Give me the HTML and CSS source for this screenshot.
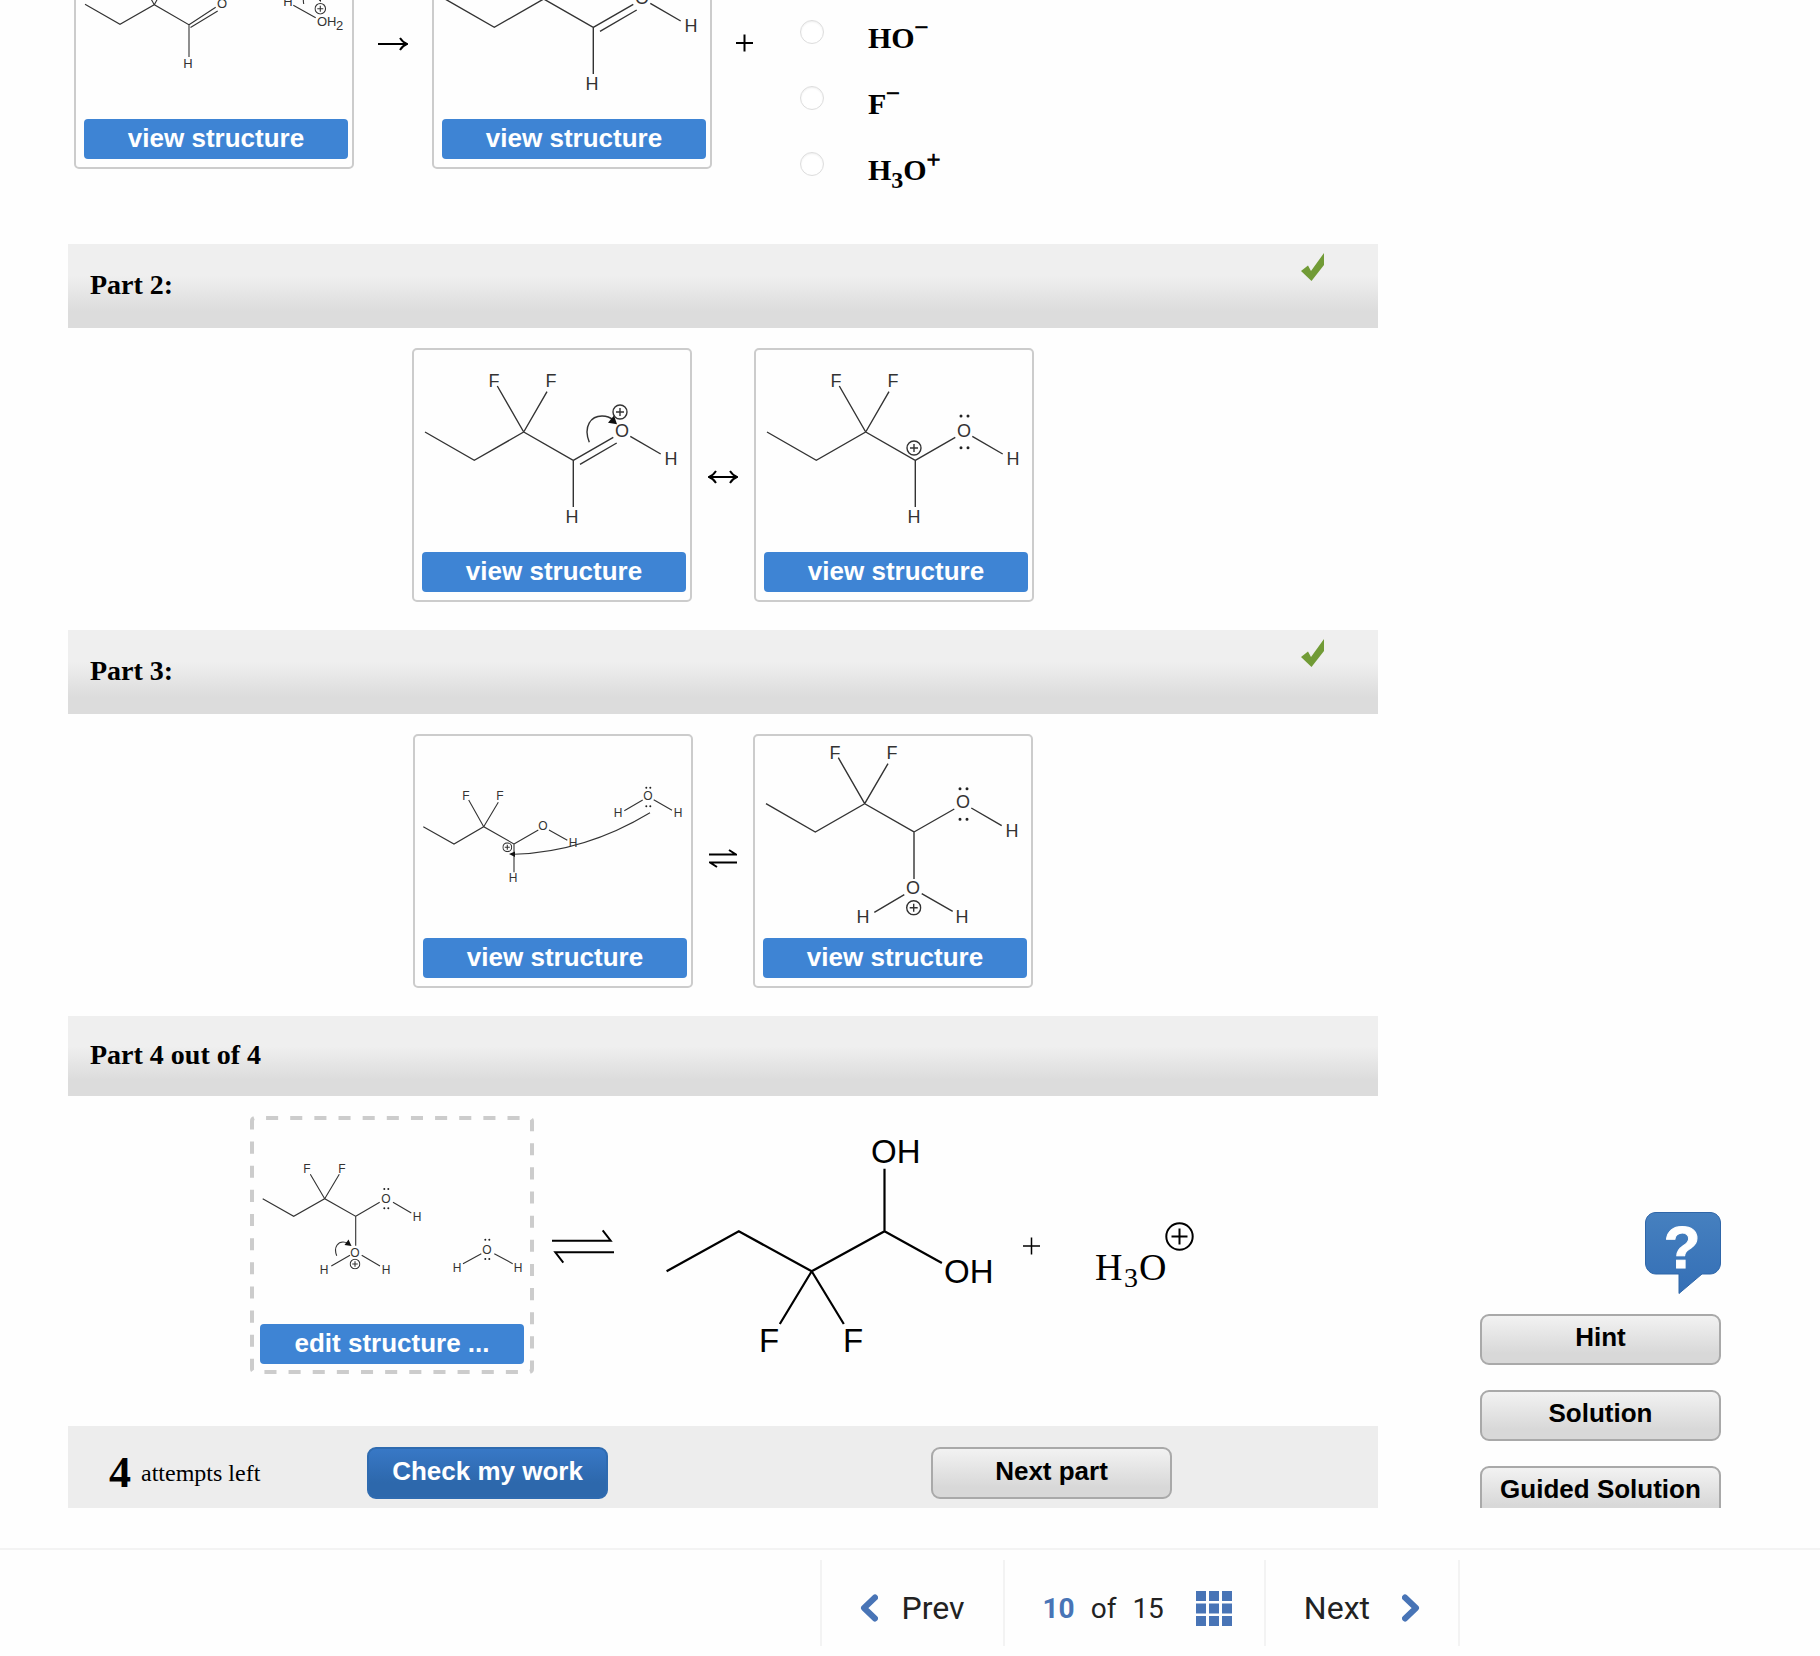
FILE: index.html
```html
<!DOCTYPE html>
<html lang="en">
<head>
  <meta charset="UTF-8" />
  <meta name="viewport" content="width=device-width, initial-scale=1.0"/>
  <title>Question 10 of 15</title>
  <link rel="stylesheet" href="styles.css">
</head>
<body>
  <!-- Shared symbols -->
  <svg class="symbols" aria-hidden="true">
    <symbol id="charge" viewBox="-8 -8 16 16">
      <circle class="hairline" r="7" /><path class="hairline" d="M-4 0H4M0 -4V4" />
    </symbol>
    <symbol id="plus" viewBox="0 0 17 20">
      <path d="M0 11H17M8.5 2.5V19.5" />
    </symbol>
    <symbol id="check" viewBox="0 0 23 28">
      <path d="M0 18L7 12.5L10 18L23 0V12L10.500 28Z" />
    </symbol>
  </svg>

  <main class="workspace">
    <div class="question">
      <!-- Part 1 -->
      <div class="part-one">
        <div class="reaction">
          <div class="card">
            <svg class="structure medium" viewBox="8 0 264 202">
              <path d="M9 87.300L44 107.300L78.300 87.700L113 107.700V140M78.300 87.700L63 61M78.300 87.700L93 61M113 107.700L139.700 90.300M114.500 110.500L141.700 94M217.300 88.300L239.700 100.700M227.700 87C225 72 238 66 243 79" />
              <path class="head" d="M244.700 85L239 79L246 77Z" />
              <text x="146" y="91">O</text>
              <text x="112" y="151">H</text>
              <text x="212" y="89">H</text>
              <text class="start" x="241" y="109">OH</text>
              <text class="start" x="260" y="113">2</text>
              <use href="#charge" x="238.300" y="85.700" width="12" height="12" />
            </svg>
            <button class="structure-btn" type="button">view structure</button>
          </div>
          <svg class="arrow" width="30" height="20" viewBox="0 0 30 20">
            <path d="M0 12H28M22 6C24 9 26 11 29 12C26 13 24 15 22 18" />
          </svg>
          <div class="card">
            <svg class="structure" viewBox="8 0 264 202">
              <path d="M11 82L60.300 110.300L109.700 82L159.300 110.300V157M109.700 82L83.300 36M109.700 82L133 41.700M159.300 110.300L199.300 87.300M166 114.300L202.700 93M216.300 86.300L246.700 104" />
              <text x="208" y="87">O</text>
              <text x="158" y="173">H</text>
              <text x="257" y="115">H</text>
            </svg>
            <button class="structure-btn" type="button">view structure</button>
          </div>
          <svg class="arrow" width="17" height="20"><use href="#plus" /></svg>
        </div>
        <div class="options">
          <label class="option"><input type="radio" name="product"><span>HO<sup>−</sup></span></label>
          <label class="option"><input type="radio" name="product"><span>F<sup>−</sup></span></label>
          <label class="option"><input type="radio" name="product"><span>H<sub>3</sub>O<sup>+</sup></span></label>
        </div>
      </div>

      <!-- Part 2 -->
      <div class="part-bar">
        <h2>Part 2:</h2>
        <svg class="check" width="23" height="28"><use href="#check" /></svg>
      </div>
      <div class="row">
        <div class="card">
          <svg class="structure" viewBox="8 0 264 202">
            <path d="M11 82L60.300 110.300L109.700 82L159.300 110.300V157M109.700 82L83.300 36M109.700 82L133 41.700M159.300 110.300L199.300 87.300M166 114.300L202.700 93M216.300 86.300L246.700 104" />
            <path d="M175.300 92.300C169 76 177 66 188 66C193 66 196 67 199 70" />
            <path class="head" d="M203 74.300L200 65.500L194 72.700Z" />
            <text x="80" y="37">F</text>
            <text x="137" y="37">F</text>
            <text x="208" y="87">O</text>
            <text x="158" y="173">H</text>
            <text x="257" y="115">H</text>
            <use href="#charge" x="198" y="54" width="16" height="16" />
          </svg>
          <button class="structure-btn" type="button">view structure</button>
        </div>
        <svg class="arrow" width="30" height="20" viewBox="0 0 30 20">
          <path d="M2 12H28M22 6C24 9 26 11 29 12C26 13 24 15 22 18M8 6C6 9 4 11 1 12C4 13 6 15 8 18" />
        </svg>
        <div class="card">
          <svg class="structure" viewBox="8 0 264 202">
            <path d="M11 82L60.300 110.300L109.700 82L159.300 110.300V157M109.700 82L83.300 36M109.700 82L133 41.700M159.300 110.300L199.300 87.300M216.300 86.300L246.700 104" />
            <path class="dots" d="M205 66h0M212 66h0M205 97.700h0M212 97.700h0" />
            <text x="80" y="37">F</text>
            <text x="137" y="37">F</text>
            <text x="208" y="87">O</text>
            <text x="158" y="173">H</text>
            <text x="257" y="115">H</text>
            <use href="#charge" x="150" y="90" width="16" height="16" />
          </svg>
          <button class="structure-btn" type="button">view structure</button>
        </div>
      </div>

      <!-- Part 3 -->
      <div class="part-bar">
        <h2>Part 3:</h2>
        <svg class="check" width="23" height="28"><use href="#check" /></svg>
      </div>
      <div class="row">
        <div class="card">
          <svg class="structure small" viewBox="8 0 264 202">
            <path d="M8.300 90.700L39 108L68.700 90.700L99 108V136.300M68.700 90.700L53.700 64M68.700 90.700L83.300 66.300M99 108L123.300 94M134 94L152.300 104.300M227.700 64L209.300 74.700M238.700 63.700L257 74.300" />
            <path d="M235 76.700Q170 116 99 118.300" />
            <path class="head" d="M94 118L100 115.500V121Z" />
            <path class="dots" d="M231.300 51.700h0M235.300 51.700h0M231.300 70.300h0M235.300 70.300h0" />
            <text x="51" y="64">F</text>
            <text x="85" y="64">F</text>
            <text x="128" y="94">O</text>
            <text x="158" y="111">H</text>
            <text x="98" y="146">H</text>
            <text x="233" y="64">O</text>
            <text x="203" y="81">H</text>
            <text x="263" y="81">H</text>
            <use href="#charge" x="87.300" y="106.300" width="10" height="10" />
          </svg>
          <button class="structure-btn" type="button">view structure</button>
        </div>
        <svg class="arrow" width="28" height="30" viewBox="0 0 28 30">
          <path d="M0 8.500H27L20 4M28 16.500H1L8 21" />
        </svg>
        <div class="card">
          <svg class="structure" viewBox="8 0 264 202">
            <path d="M11 67.700L60.300 96L109.700 67.700L159 96V143M109.700 67.700L83.300 21.700M109.700 67.700L133 27.700M159 96L199.300 73M216.300 72L246.700 89.700M149.300 158.700L119.300 176.300M166.700 157.700L197.700 175.300" />
            <path class="dots" d="M205 52.700h0M212 52.700h0M205 83.300h0M212 83.300h0" />
            <text x="80" y="23">F</text>
            <text x="137" y="23">F</text>
            <text x="208" y="72">O</text>
            <text x="257" y="101">H</text>
            <text x="158" y="158">O</text>
            <text x="108" y="187">H</text>
            <text x="207" y="187">H</text>
            <use href="#charge" x="150.700" y="163.700" width="16" height="16" />
          </svg>
          <button class="structure-btn" type="button">view structure</button>
        </div>
      </div>

      <!-- Part 4 -->
      <div class="part-bar current">
        <h2>Part 4 out of 4</h2>
      </div>
      <div class="row last">
        <div class="card editable">
          <svg class="dashes" aria-hidden="true"><rect x="2" y="2" rx="3" pathLength="1056" /></svg>
          <svg class="structure small" viewBox="6 0 264 204">
            <path d="M8.700 78.700L39.700 96.300L70.700 78.700L101.700 96.300V125.700M70.700 78.700L56.300 54.300M70.700 78.700L85.300 54.300M101.700 96.300L125.700 82.300M139 82.300L157.300 93M96 135.300L77.300 146M107.700 135.300L126 146M227.300 133.700L209 143.700M240.300 133.700L258.700 143.700" />
            <path d="M82.700 135.700C79 126 85 122 89 122C91 122 92 122 94 123.500" />
            <path class="head" d="M97.500 126L94.500 119.500L90.500 125Z" />
            <path class="dots" d="M130.300 69h0M134.300 69h0M130.300 88.300h0M134.300 88.300h0M231.300 119.700h0M235.300 119.700h0M231.300 139h0M235.300 139h0" />
            <text x="53" y="53">F</text>
            <text x="88" y="53">F</text>
            <text x="132" y="83">O</text>
            <text x="163" y="101">H</text>
            <text x="101" y="137">O</text>
            <text x="70" y="154">H</text>
            <text x="132" y="154">H</text>
            <text x="233" y="134">O</text>
            <text x="203" y="152">H</text>
            <text x="264" y="152">H</text>
            <use href="#charge" x="95.500" y="138.500" width="11" height="11" />
          </svg>
          <button class="structure-btn" type="button">edit structure ...</button>
        </div>
        <svg class="arrow" width="66" height="40" viewBox="0 0 66 40">
          <path d="M2 15.700H60.700L52.700 5.300M64 27.300H5.300L13.300 37.700" />
        </svg>
        <svg class="product" width="375" height="230" viewBox="0 0 375 230">
          <path d="M34.600 141.300L106.800 101.300L179.700 141.300L252.500 101.300V38.700M252.500 101.300L309.900 133M179.700 141.300L147.800 194M179.700 141.300L211.800 194" />
          <text x="239" y="33">OH</text>
          <text x="312" y="153">OH</text>
          <text x="127" y="222">F</text>
          <text x="211" y="222">F</text>
        </svg>
        <svg class="arrow thin" width="17" height="20"><use href="#plus" /></svg>
        <svg class="hydronium" width="140" height="90" viewBox="0 0 140 90">
          <text x="39" y="80">H</text>
          <text class="sub" x="68" y="87">3</text>
          <text x="83" y="80">O</text>
          <circle cx="123.500" cy="36.500" r="13.200" />
          <path d="M115.500 36.500H131.500M123.500 28.500V44.500" />
        </svg>
      </div>

      <div class="actions">
        <p class="attempts"><strong>4</strong> attempts left</p>
        <button class="btn primary" type="button">Check my work</button>
        <button class="btn next-part" type="button">Next part</button>
      </div>
    </div>

    <aside class="sidebar">
      <svg class="help" width="76" height="82" viewBox="0 0 76 82">
        <defs>
          <linearGradient id="bubble" x1="0" y1="0" x2="0" y2="1">
            <stop offset="0" stop-color="#4680bf" />
            <stop offset="1" stop-color="#346fb6" />
          </linearGradient>
        </defs>
        <path d="M11 0.500H65C71 0.500 75.500 5 75.500 11V51C75.500 57 71 62 65 62H57L34 81.500V62H11C5 62 0.500 57 0.500 51V11C0.500 5 5 0.500 11 0.500Z" />
        <text x="37" y="56">?</text>
      </svg>
      <div class="side-buttons">
        <button class="btn" type="button">Hint</button>
        <button class="btn" type="button">Solution</button>
        <button class="btn" type="button">Guided Solution</button>
      </div>
    </aside>
  </main>

  <nav class="pager">
    <a class="pager-item prev" href="#">
      <svg class="chevron" width="18" height="28" viewBox="0 0 18 28"><path d="M15 3.500L4 14L15 24.500" /></svg>
      Prev
    </a>
    <div class="pager-item count">
      <b>10</b><span>of</span><span>15</span>
      <a href="#" aria-label="All questions">
        <svg class="grid" width="36" height="35" viewBox="0 0 36 35">
          <path d="M0 0h10v10h-10zM13 0h10v10h-10zM26 0h10v10h-10zM0 12.500h10v10h-10zM13 12.500h10v10h-10zM26 12.500h10v10h-10zM0 25h10v10h-10zM13 25h10v10h-10zM26 25h10v10h-10z" />
        </svg>
      </a>
    </div>
    <a class="pager-item next" href="#">
      Next
      <svg class="chevron" width="18" height="28" viewBox="0 0 18 28"><path d="M3 3.500L14 14L3 24.500" /></svg>
    </a>
  </nav>
</body>
</html>
```
FILE: styles.css
```css
* {
  box-sizing: border-box;
}

body {
  margin: 0;
  background: #fefefe;
  color: #000;
  font-family: "Liberation Serif", "Times New Roman", serif;
}

svg {
  display: block;
  flex-shrink: 0;
}

.symbols {
  position: absolute;
  width: 0;
  height: 0;
}

.hairline {
  vector-effect: non-scaling-stroke;
}

.workspace {
  display: flex;
  gap: 102px;
  padding: 0 99px 0 68px;
  overflow: hidden;
}

.question {
  flex: 1;
}

/* Part 1 is scrolled partly out of view */
.part-one {
  display: flex;
  align-items: flex-end;
  gap: 47px;
  margin-top: -85px;
  padding: 0 0 37px 6px;
}

.reaction {
  display: flex;
  align-items: center;
  gap: 24px;
  margin-bottom: 38px;
}

.option {
  display: flex;
  align-items: center;
  gap: 44px;
  height: 66px;
  padding-bottom: 8px;
  font-size: 30px;
  font-weight: bold;
}

.option input {
  appearance: none;
  width: 24px;
  height: 24px;
  margin: 0 0 12px;
  border: 1px solid #ddd;
  border-radius: 50%;
  background: #fff;
  box-shadow: inset 0 1px 2px #eee;
}

.option sup,
.option sub {
  font-size: 24px;
  line-height: 0;
}

.option sup {
  font-weight: normal;
  vertical-align: 13px;
  -webkit-text-stroke: 1px #000;
}

.option sub {
  vertical-align: -8px;
}

.part-bar {
  display: flex;
  justify-content: space-between;
  align-items: center;
  height: 84px;
  padding: 0 54px 2px 22px;
  background: linear-gradient(#efefef 38%, #dcdcdc 80%);
}

.part-bar.current {
  height: 80px;
}

.part-bar h2 {
  margin: 0;
  font-size: 28px;
}

.check {
  align-self: flex-start;
  margin-top: 9px;
  fill: #719b36;
}

.row {
  display: flex;
  justify-content: center;
  align-items: center;
  gap: 16px;
  padding: 20px 0 28px;
}

.row.last {
  padding-bottom: 52px;
}

.card {
  width: 280px;
  padding: 0 4px 8px 8px;
  border: 2px solid #ccc;
  border-radius: 5px;
}

.card.editable {
  position: relative;
  width: 284px;
  padding: 0 6px 6px;
  border: 4px solid transparent;
}

/* Long dashes, drawn over the card's transparent border */
.dashes {
  position: absolute;
  top: -4px;
  left: -4px;
  width: calc(100% + 8px);
  height: calc(100% + 8px);
  fill: none;
  stroke: #ccc;
  stroke-width: 4;
  stroke-dasharray: 12 12;
  stroke-dashoffset: 13;
  pointer-events: none;
}

.dashes rect {
  width: calc(100% - 4px);
  height: calc(100% - 4px);
}

.structure {
  width: 100%;
  overflow: visible;
  fill: none;
  stroke: #333;
  stroke-width: 1.4;
}

.structure text {
  fill: #333;
  stroke: none;
  font: 18px "Liberation Sans", Arial, sans-serif;
  text-anchor: middle;
}

.structure.medium,
.structure.small {
  stroke-width: 1.1;
}

.structure.medium text {
  font-size: 13px;
}

.structure.small text {
  font-size: 12px;
}

.structure .start {
  text-anchor: start;
}

.structure .head {
  fill: #111;
  stroke: none;
}

.structure .dots {
  stroke: #222;
  stroke-width: 3;
  stroke-linecap: round;
}

.structure.small .dots {
  stroke-width: 2;
}

.structure-btn {
  display: block;
  width: 100%;
  height: 40px;
  padding: 0 0 2px;
  border: 0;
  border-radius: 4px;
  background: #3e84d4;
  color: #fff;
  font: bold 26px "Liberation Sans", Arial, sans-serif;
  cursor: pointer;
}

.arrow {
  fill: none;
  stroke: #000;
  stroke-width: 2;
}

.arrow.thin {
  stroke-width: 1.5;
}

.product {
  fill: none;
  stroke: #000;
  stroke-width: 2.2;
}

.product text {
  fill: #000;
  stroke: none;
  font: 33px "Liberation Sans", Arial, sans-serif;
}

.hydronium {
  fill: none;
  stroke: #000;
  stroke-width: 2;
}

.hydronium text {
  fill: #000;
  stroke: none;
  font-size: 38px;
}

.hydronium .sub {
  font-size: 28px;
}

.actions {
  display: flex;
  align-items: center;
  padding: 21px 0 9px 41px;
  background: #ededed;
}

.attempts {
  display: flex;
  align-items: center;
  gap: 10px;
  width: 258px;
  margin: 0;
  font-size: 24px;
  line-height: 44px;
}

.attempts strong {
  font-size: 44px;
}

.btn {
  width: 241px;
  height: 52px;
  padding: 0 0 4px;
  border: 2px solid #a9a9a9;
  border-radius: 9px;
  background: linear-gradient(#f2f2f2, #d8d8d8 80%);
  color: #000;
  font: bold 26px "Liberation Sans", Arial, sans-serif;
  cursor: pointer;
}

.btn.primary {
  border-color: #2f6bb0;
  background: linear-gradient(#3878c6, #2d68ac 70%);
  color: #fff;
}

.next-part {
  margin-left: 323px;
}

.sidebar {
  display: flex;
  flex-direction: column;
  justify-content: flex-end;
  align-items: flex-end;
  gap: 20px;
  margin-bottom: -9px;
}

.side-buttons {
  display: flex;
  flex-direction: column;
  gap: 25px;
}

.side-buttons .btn {
  height: 51px;
}

.help path {
  fill: url(#bubble);
  stroke: #2f66a8;
}

.help text {
  fill: #fff;
  stroke: #fff;
  font: bold 60px "Liberation Sans", Arial, sans-serif;
  text-anchor: middle;
}

.pager {
  display: flex;
  justify-content: flex-end;
  margin-top: 40px;
  padding: 10px 360px 10px 0;
  border-top: 2px solid #f3f3f3;
  font: 32px Roboto, sans-serif;
}

.pager-item {
  display: flex;
  align-items: center;
  height: 86px;
  padding: 10px 38px 0;
  border-left: 2px solid #f3f3f3;
  color: #222;
  text-decoration: none;
}

.prev {
  gap: 24px;
}

.count {
  gap: 16px;
  padding-right: 32px;
  font-size: 28px;
}

.count b {
  color: #4874b6;
}

.count a {
  margin-left: 16px;
}

.next {
  gap: 32px;
  border-right: 2px solid #f3f3f3;
}

.chevron {
  fill: none;
  stroke: #4874b6;
  stroke-width: 6;
  stroke-linecap: round;
  stroke-linejoin: round;
}

.grid {
  fill: #4874b6;
}
```
